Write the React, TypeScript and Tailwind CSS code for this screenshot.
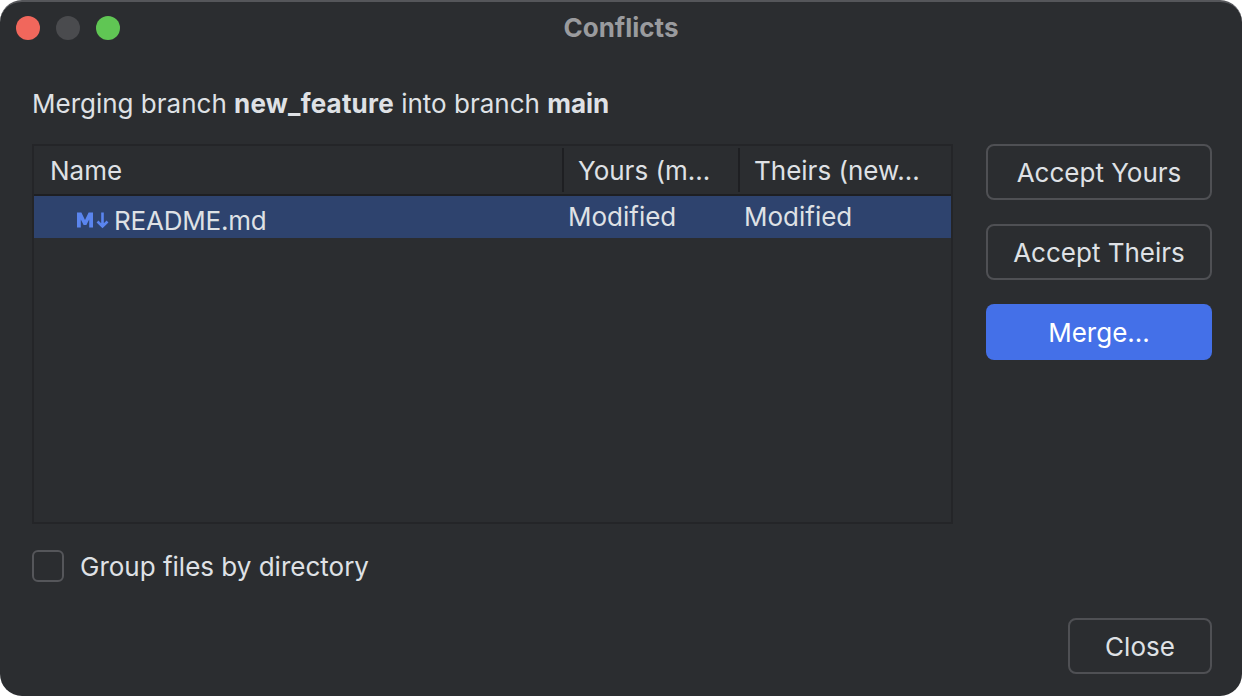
function DialogButton(props: { label: string; primary?: boolean; className?: string }) {
  const look = props.primary
    ? "bg-[#4470e8] text-white"
    : "border-2 border-[#4f5054] text-[#dfe1e5]"
  return (
    <button className={"flex h-14 items-center justify-center rounded-[8px] text-[26px] " + look + " " + (props.className ?? "")}>
      {props.label}
    </button>
  )
}

function MarkdownIcon() {
  return (
    <svg width="34" height="20" viewBox="0 0 34 20" fill="none" className="shrink-0">
      <path d="M2 17.5V2.5H6.4L10 10L13.6 2.5H18V17.5H14.2V9.5L11.4 15H8.6L5.8 9.5V17.5Z" fill="#5a85ef" />
      <path d="M27.5 2.5V16M22.5 11.5L27.5 16.5L32.5 11.5" stroke="#5a85ef" strokeWidth="2.6" />
    </svg>
  )
}

export default function App() {
  return (
    <div className="h-[696px] w-[1242px] bg-white font-['Inter',sans-serif] text-[26px] text-[#dfe1e5]">
      <div className="flex h-full flex-col overflow-hidden rounded-[22px] border-t-2 border-[#55565a] bg-[#2b2d30]">
        <div className="relative flex h-[50px] shrink-0 items-center justify-center">
          <div className="absolute left-4 top-[14px] flex gap-4">
            <span className="h-6 w-6 rounded-full bg-[#f1675c]" />
            <span className="h-6 w-6 rounded-full bg-[#4a4b4e]" />
            <span className="h-6 w-6 rounded-full bg-[#60c654]" />
          </div>
          <span className="font-bold text-[#9a9b9e]">Conflicts</span>
        </div>

        <div className="flex h-[92px] shrink-0 items-center px-8 pt-[10px]">
          <span>
            Merging branch <b className="tracking-[0.2px]">new_feature</b> into branch <b>main</b>
          </span>
        </div>

        <div className="flex shrink-0 pl-8">
          <div className="flex h-[380px] w-[921px] flex-col border-2 border-[#242528]">
            <div className="flex h-[50px] shrink-0 items-center border-b-2 border-[#1e1f22]">
              <div className="flex-1 pl-4">Name</div>
              <div className="flex h-11 w-[176px] items-center border-l-2 border-[#1e1f22] pl-[14px]">Yours (m...</div>
              <div className="flex h-11 w-[213px] items-center border-l-2 border-[#1e1f22] pl-[14px]">Theirs (new...</div>
            </div>
            <div className="flex h-[42px] shrink-0 items-center bg-[#2e436e]">
              <div className="flex flex-1 items-center pl-[41px] pt-[6px]">
                <MarkdownIcon />
                <span className="ml-[5px] tracking-[-0.2px]">README.md</span>
              </div>
              <div className="w-[176px] pb-[2px] pl-px">Modified</div>
              <div className="w-[208px] pb-[2px] pl-px">Modified</div>
            </div>
          </div>
          <div className="ml-[33px] flex w-[226px] flex-col gap-6">
            <DialogButton label="Accept Yours" />
            <DialogButton label="Accept Theirs" />
            <DialogButton label="Merge..." primary />
          </div>
        </div>

        <div className="mt-[26px] flex h-8 shrink-0 items-center gap-4 pl-8">
          <span className="h-8 w-8 rounded-[6px] border-2 border-[#55565a]" />
          <span className="pt-px">Group files by directory</span>
        </div>

        <div className="mt-[36px] flex shrink-0 justify-end pr-[30px]">
          <DialogButton label="Close" className="w-[144px]" />
        </div>
      </div>
    </div>
  )
}
